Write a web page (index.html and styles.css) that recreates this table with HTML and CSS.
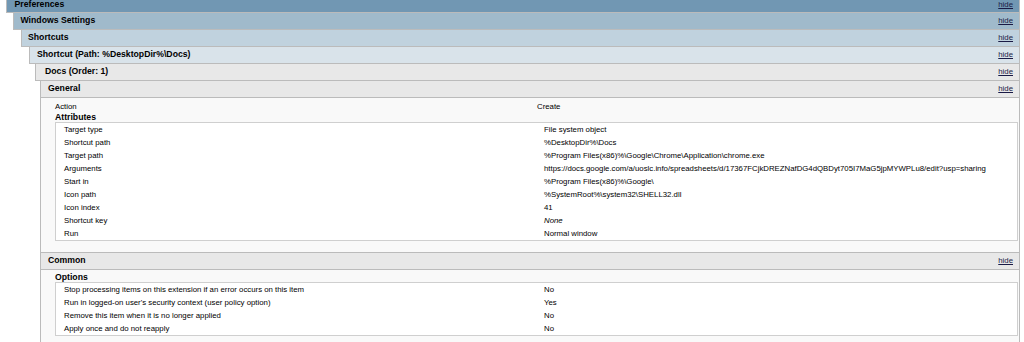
FILE: index.html
```html
<!DOCTYPE html>
<html lang="en">
<head>
<meta charset="utf-8">
<title>Preferences report</title>
<link rel="stylesheet" href="styles.css">
</head>
<body>
<div class="report">
  <div class="head lv1"><span>Preferences</span><a class="hide" href="#">hide</a></div>
  <div class="head lv2"><span>Windows Settings</span><a class="hide" href="#">hide</a></div>
  <div class="head lv3"><span>Shortcuts</span><a class="hide" href="#">hide</a></div>
  <div class="head lv4"><span>Shortcut (Path: %DesktopDir%\Docs)</span><a class="hide" href="#">hide</a></div>
  <div class="head lv5"><span>Docs (Order: 1)</span><a class="hide" href="#">hide</a></div>
  <div class="head lv6"><span>General</span><a class="hide" href="#">hide</a></div>
  <div class="panel">
    <div class="pair"><span>Action</span><span>Create</span></div>
    <div class="sub">Attributes</div>
    <div class="box">
      <span>Target type</span><span>File system object</span>
      <span>Shortcut path</span><span>%DesktopDir%\Docs</span>
      <span>Target path</span><span>%Program Files(x86)%\Google\Chrome\Application\chrome.exe</span>
      <span>Arguments</span><span>https://docs.google.com/a/uoslc.info/spreadsheets/d/17367FCjkDREZNafDG4dQBDyt705I7MaG5jpMYWPLu8/edit?usp=sharing</span>
      <span>Start in</span><span>%Program Files(x86)%\Google\</span>
      <span>Icon path</span><span>%SystemRoot%\system32\SHELL32.dll</span>
      <span>Icon index</span><span>41</span>
      <span>Shortcut key</span><span class="none">None</span>
      <span>Run</span><span>Normal window</span>
    </div>
  </div>
  <div class="head lv6"><span>Common</span><a class="hide" href="#">hide</a></div>
  <div class="panel panel-tight">
    <div class="sub">Options</div>
    <div class="box">
      <span>Stop processing items on this extension if an error occurs on this item</span><span>No</span>
      <span>Run in logged-on user's security context (user policy option)</span><span>Yes</span>
      <span>Remove this item when it is no longer applied</span><span>No</span>
      <span>Apply once and do not reapply</span><span>No</span>
    </div>
  </div>
</div>
</body>
</html>
```
FILE: styles.css
```css
* { box-sizing: border-box; }

body {
  margin: 0;
  background: #ffffff;
  color: #000000;
  font-family: "Liberation Sans", Arial, sans-serif;
  font-size: 7.8px;
  overflow: hidden;
}

.report {
  width: 1020px;
}

.head {
  display: flex;
  justify-content: space-between;
  align-items: flex-start;
  height: 18px;
  margin-bottom: -1px;
  padding-top: 2px;
  padding-right: 6px;
  border: 1px solid #bbbbbb;
  font-size: 8.7px;
  font-weight: bold;
  line-height: 11px;
}

.lv1 { margin-top: -4px; height: 17px; margin-left: 6px; padding-left: 7.5px; background: #7197b3; }
.lv2 { margin-left: 13px; padding-left: 6.5px; background: #a0bacb; }
.lv3 { margin-left: 21px; padding-left: 6px; background: #c0d2de; }
.lv4 { margin-left: 29px; padding-left: 7px; background: #d9e3ea; }
.lv5 { margin-left: 35px; padding-left: 9px; background: #e8e8e8; }
.lv6 { margin-left: 40px; padding-left: 7px; background: #e8e8e8; }

.hide {
  font-size: 7.8px;
  font-weight: normal;
  color: #1a1a45;
  text-decoration: underline;
}

.panel {
  margin-left: 40px;
  margin-bottom: -1px;
  padding: 4px 1px 11px 14px;
  border: 1px solid #bbbbbb;
  background: #f9f9f9;
}

.panel-tight {
  padding-top: 2px;
}

.pair {
  display: grid;
  grid-template-columns: 482px 1fr;
  line-height: 10px;
}

.sub {
  font-size: 8.7px;
  font-weight: bold;
  line-height: 10px;
}

.box {
  display: grid;
  grid-template-columns: 480px 1fr;
  padding-left: 8px;
  border: 1px solid #cfcfcf;
  background: #ffffff;
  line-height: 13px;
  white-space: nowrap;
}

.none {
  font-style: italic;
}
```
